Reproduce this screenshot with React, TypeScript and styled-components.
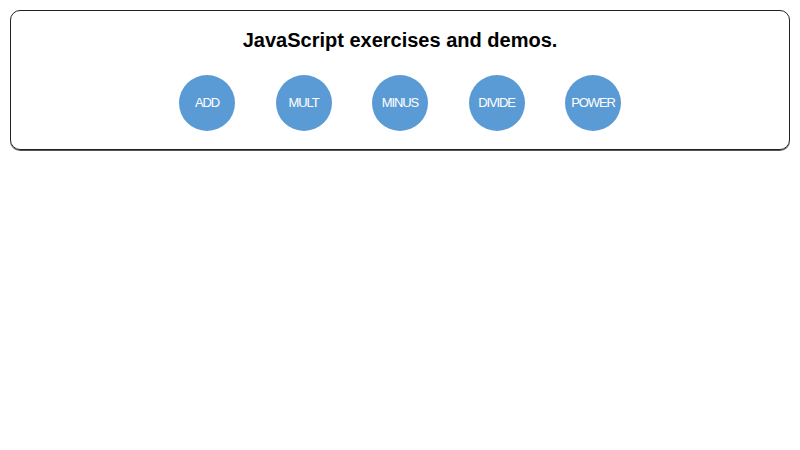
import styled, { createGlobalStyle } from "styled-components";

const GlobalStyle = createGlobalStyle`
  body {
    margin: 0;
    background: #ffffff;
    font-family: "Liberation Sans", Arial, sans-serif;
  }
`;

const buttons = ["ADD", "MULT", "MINUS", "DIVIDE", "POWER"];

export default function App() {
  return (
    <>
      <GlobalStyle />
      <Panel>
        <Title>JavaScript exercises and demos.</Title>
        <ButtonRow>
          {buttons.map((label) => (
            <RoundButton key={label}>{label}</RoundButton>
          ))}
        </ButtonRow>
      </Panel>
    </>
  );
}

const Panel = styled.div`
  margin: 10px;
  height: 140px;
  box-sizing: border-box;
  border: 1.5px solid #222;
  border-radius: 10px;
  box-shadow: 0 1px 0 #555;
  display: flex;
  flex-direction: column;
  align-items: center;
  padding-top: 17px;
`;

const Title = styled.h1`
  margin: 0;
  font-size: 20px;
  font-weight: 700;
  color: #000;
  line-height: 24px;
`;

const ButtonRow = styled.div`
  display: flex;
  gap: 40.5px;
  margin-top: 23px;
`;

const RoundButton = styled.button`
  width: 56px;
  height: 56px;
  border-radius: 50%;
  border: none;
  padding: 0 0 1px;
  background: #5b9bd5;
  color: #fff;
  font-family: "Liberation Sans", Arial, sans-serif;
  font-size: 13px;
  letter-spacing: -1.1px;
  cursor: pointer;
`;
